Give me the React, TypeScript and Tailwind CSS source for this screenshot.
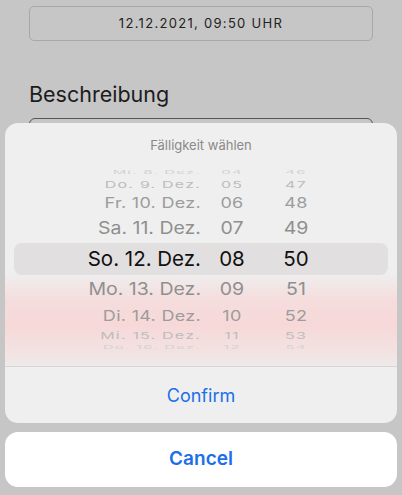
import React from 'react';

type Row = { d: string; h: string; m: string; cls: string; sel?: boolean };

const rows: Row[] = [
  { d: 'Mi. 8. Dez.', h: '04', m: '46', cls: 'h-[10px] text-[15px] scale-y-[0.3] text-[#d2d2d2] tracking-[1.2px]' },
  { d: 'Do. 9. Dez.', h: '05', m: '47', cls: 'h-[14px] text-[16px] scale-y-[0.6] text-[#bcbcbc] tracking-[1.2px]' },
  { d: 'Fr. 10. Dez.', h: '06', m: '48', cls: 'h-[24px] text-[18px] scale-y-[0.8] text-[#9c9c9c] tracking-[0.3px]' },
  { d: 'Sa. 11. Dez.', h: '07', m: '49', cls: 'h-[28px] text-[19.5px] scale-y-[0.88] text-[#8f8f8f]' },
  { d: 'So. 12. Dez.', h: '08', m: '50', cls: 'h-[32px] text-[20.5px] text-[#111]', sel: true },
  { d: 'Mo. 13. Dez.', h: '09', m: '51', cls: 'h-[30px] text-[19.5px] scale-y-[0.88] text-[#8f8f8f]' },
  { d: 'Di. 14. Dez.', h: '10', m: '52', cls: 'h-[22px] text-[18px] scale-y-[0.8] text-[#9c9c9c] tracking-[0.3px]' },
  { d: 'Mi. 15. Dez.', h: '11', m: '53', cls: 'h-[16px] text-[16px] scale-y-[0.6] text-[#bcbcbc] tracking-[1.2px]' },
  { d: 'Do. 16. Dez.', h: '12', m: '54', cls: 'h-[8px] text-[15px] scale-y-[0.3] text-[#d2d2d2] tracking-[1.2px]' },
];

function PickerRow({ r }: { r: Row }) {
  if (r.sel) {
    return (
      <div className="mx-[9px] h-[32px] rounded-[8px] bg-[#e1dfdf] flex items-center text-[20.5px] leading-none text-[#111]">
        <span className="w-[187px] text-right">{r.d}</span>
        <span className="w-[62px] text-center">{r.h}</span>
        <span className="w-[66px] text-center">{r.m}</span>
      </div>
    );
  }
  return (
    <div className={`flex items-center leading-none ${r.cls}`}>
      <span className="w-[196px] text-right">{r.d}</span>
      <span className="w-[62px] text-center">{r.h}</span>
      <span className="w-[66px] text-center">{r.m}</span>
    </div>
  );
}

export default function App() {
  return (
    <div className="relative w-[402px] h-[495px] overflow-hidden bg-[#c6c6c6] font-['Inter','Liberation_Sans',sans-serif]">
      <div className="px-[29px] pt-[6px]">
        <div className="h-[35px] rounded-[5px] border border-[#a8a8a8] flex items-center justify-center text-[13px] tracking-[1.3px] text-[#222]">
          12.12.2021, 09:50 UHR
        </div>
        <div className="mt-[40px] h-[26px] leading-[26px] text-[21.5px] text-[#1c1c1c]">Beschreibung</div>
        <div className="mt-[11px] h-[60px] rounded-[6px] border border-[#555]" />
      </div>

      <div className="absolute left-[5px] right-[5px] top-[123px]">
        <div className="rounded-[13px] bg-[#efefef] overflow-hidden">
          <div className="h-[35px] pt-[14px] text-center text-[13px] leading-[16px] text-[#8a8a8a]">Fälligkeit wählen</div>
          <div className="h-[208px] pt-[9px] bg-[linear-gradient(to_bottom,#efefef_0%,#efefef_55%,#f5dddd_68%,#f7d8d8_80%,#f3e2e2_93%,#efe9e9_100%)]">
            {rows.map(r => <PickerRow key={r.d} r={r} />)}
          </div>
          <div className="h-px bg-[#d8d3d3]" />
          <div className="h-[56px] flex items-center justify-center text-[18px] text-[#1b6fe9]">Confirm</div>
        </div>
        <div className="mt-[9px] h-[55px] rounded-[13px] bg-white flex items-center justify-center text-[19px] font-semibold text-[#1b6fe9]">
          Cancel
        </div>
      </div>
    </div>
  );
}
